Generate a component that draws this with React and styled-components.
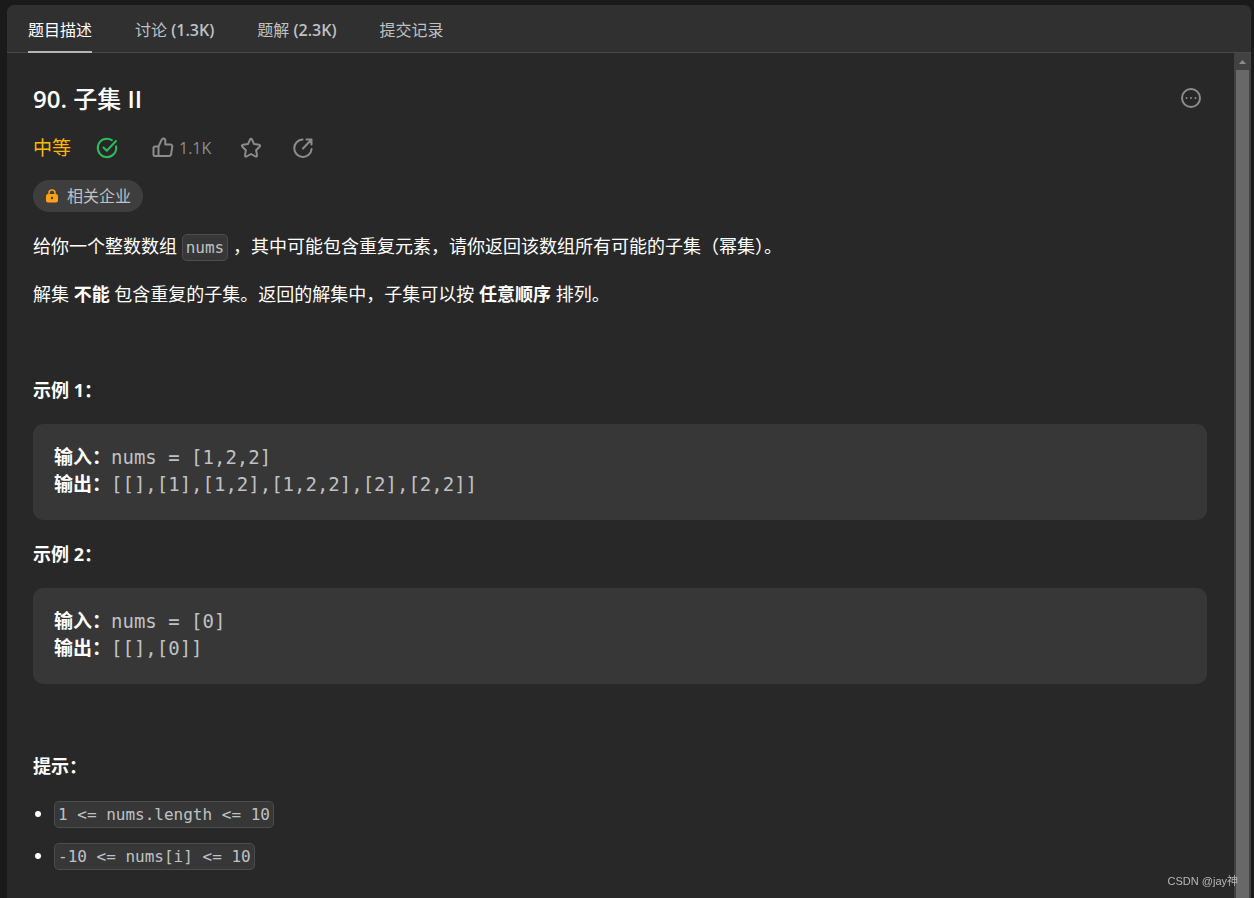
// Libraries
import React, { useState } from 'react';
import styled, { createGlobalStyle } from 'styled-components';

// Colors
const pageColor = '#1a1a1a';
const panelColor = '#282828';
const headerColor = '#303030';
const borderColor = '#484848';
const blockColor = '#373737';
const textColor = '#ffffff';
const labelColor = '#bfc1c4';
const iconColor = '#8c8c8c';

const cjk = `'Noto Sans CJK SC', sans-serif`;
const mono = `'DejaVu Sans Mono', ${cjk}`;

const GlobalStyle = createGlobalStyle`
  * {
    box-sizing: border-box;
  }
  body {
    margin: 0;
    background: ${pageColor};
    color: ${textColor};
    font-family: 'Open Sans', ${cjk};
    overflow: hidden;
  }
  button {
    border: 0;
    padding: 0;
    background: none;
    color: inherit;
    font: inherit;
    cursor: pointer;
  }
`

const Page = styled.div`
  height: 100vh;
  padding: 5px 3px 0 7px;
`

const Panel = styled.main`
  display: flex;
  flex-direction: column;
  height: 100%;
  background: ${panelColor};
  border-radius: 7px 7px 0 0;
  overflow: hidden;
`

const TabBar = styled.nav`
  display: flex;
  flex: none;
  gap: 43px;
  height: 48px;
  padding: 0 21px;
  background: ${headerColor};
  border-bottom: 1px solid ${borderColor};
`

const Tab = styled.button`
  height: 48px;
  font-size: 16px;
  line-height: 24px;
  color: ${props => props.$active ? textColor : labelColor};
  border-top: 4px solid transparent;
  border-bottom: 2px solid ${props => props.$active ? '#b4b6b6' : 'transparent'};
`

const Count = styled.span`
  font-weight: 600;
`

const Body = styled.div`
  display: flex;
  flex: 1;
  min-height: 0;
`

const Content = styled.article`
  flex: 1;
  min-width: 0;
  padding: 29px 27px 0 26px;
  overflow: hidden;
`

const TitleRow = styled.header`
  display: flex;
  align-items: flex-start;
  justify-content: space-between;
  height: 34px;
  padding-right: 4px;
`

const Title = styled.h1`
  margin: 0;
  font-size: 24px;
  line-height: 34px;
  font-weight: 600;

  span {
    font-weight: 500;
  }
`

const MoreButton = styled.button`
  height: 32px;
  color: ${iconColor};
`

const MetaRow = styled.div`
  display: flex;
  align-items: center;
  height: 28px;
  margin-top: 18px;
  color: ${iconColor};
`

const Difficulty = styled.span`
  width: 62px;
  font-size: 19px;
  line-height: 30px;
  color: #ffb800;
`

const IconButton = styled.button`
  display: flex;
  align-items: center;
  gap: 4px;
  height: 24px;
  margin-right: ${props => props.$done ? 32 : 28}px;
  font-size: 16px;
  color: ${props => props.$done ? '#2cbb5d' : iconColor};
`

const Icon = styled.svg`
  display: block;
  width: 24px;
  height: 24px;
  fill: none;
  stroke: currentColor;
  stroke-width: 2;
  stroke-linecap: round;
  stroke-linejoin: round;
`

const CompanyTag = styled.button`
  display: flex;
  align-items: center;
  gap: 8px;
  height: 32px;
  margin: 18px 0 21px;
  && {
    padding: 0 12px;
    background: #3e3e3e;
  }
  border-radius: 16px;
  font-size: 16px;
  line-height: 24px;
  color: ${labelColor};
`

const Lock = styled.svg`
  width: 14px;
  height: 14px;
`

const Text = styled.p`
  margin: 0 0 21px;
  font-size: 18px;
  line-height: 27px;
`

const Heading = styled.h2`
  margin: 0 0 20px;
  font-size: 18px;
  line-height: 27px;
  font-weight: 700;
`

const Code = styled.code`
  padding: 3px;
  border: 1px solid #4c4c4c;
  border-radius: 5px;
  background: ${blockColor};
  color: ${labelColor};
  font-family: ${mono};
  font-size: 16px;
  line-height: 1;
`

const Example = styled.pre`
  margin: 0 0 21px;
  padding: 20px 21px 22px;
  border-radius: 10px;
  background: ${blockColor};
  color: ${labelColor};
  font-family: ${mono};
  font-size: 19px;
  line-height: 27px;

  strong {
    color: ${textColor};
    font-family: ${cjk};
    line-height: 1;
  }
`

const Hints = styled.ul`
  display: flex;
  flex-direction: column;
  gap: 15px;
  margin: 0;
  padding-left: 21px;
  font-size: 18px;
  line-height: 27px;
`

const Scrollbar = styled.div`
  display: flex;
  flex: none;
  flex-direction: column;
  width: 17px;
  padding: 0 2px;
  background: #424242;
`

const ScrollUp = styled.div`
  display: flex;
  align-items: center;
  justify-content: center;
  height: 17px;
`

const Thumb = styled.div`
  flex: 1;
  background: #686868;
`

const Watermark = styled.div`
  position: fixed;
  right: 16px;
  bottom: 9px;
  font-family: 'Liberation Sans', ${cjk};
  font-size: 11px;
  line-height: 16px;
  color: #b8b8b8;
`

const tabs = [
  { name: '题目描述' },
  { name: '讨论', count: '1.3K' },
  { name: '题解', count: '2.3K' },
  { name: '提交记录' },
];

const App = () => {
  const [active, setActive] = useState('题目描述');

  return (
    <Page>
      <GlobalStyle />
      <Panel>
        <TabBar>
          {tabs.map(tab => (
            <Tab key={tab.name} $active={tab.name === active} onClick={() => setActive(tab.name)}>
              {tab.name}{tab.count && <Count> ({tab.count})</Count>}
            </Tab>
          ))}
        </TabBar>
        <Body>
          <Content>
            <TitleRow>
              <Title>90. <span>子集</span> II</Title>
              <MoreButton aria-label="更多">
                <Icon viewBox="0 0 24 24">
                  <circle cx="12" cy="12" r="9" />
                  <path d="M7.5 12h.01M12 12h.01M16.5 12h.01" />
                </Icon>
              </MoreButton>
            </TitleRow>

            <MetaRow>
              <Difficulty>中等</Difficulty>
              <IconButton $done aria-label="已解答">
                <Icon viewBox="0 0 24 24">
                  <path d="M21 10.2A9.2 9.2 0 1 1 16.8 4.1" />
                  <path d="M8.5 11.5l3.3 3.3L21 5" />
                </Icon>
              </IconButton>
              <IconButton>
                <Icon viewBox="0 0 24 24">
                  <path d="M7.5 11v9M4 10.500h3.5l3.2-6.900c.3-.7.9-1.1 1.5-1.1 1.3 0 2.1 1 2.1 2.2V8.500h5.1c1.2 0 2.1 1 1.9 2.2l-1.2 7.500A2.100 2.100 0 0 1 18 20H4a1.500 1.500 0 0 1-1.500-1.500v-6.500A1.500 1.500 0 0 1 4 10.500z" />
                </Icon>
                1.1K
              </IconButton>
              <IconButton aria-label="收藏">
                <Icon viewBox="0 0 24 24">
                  <path d="M11.100 3.400a1 1 0 0 1 1.800 0l2.200 4.700 5.100.7a1 1 0 0 1 .6 1.700l-3.700 3.700.9 5.200a1 1 0 0 1-1.500 1.100L12 18l-4.500 2.500A1 1 0 0 1 6 19.400l.9-5.200-3.700-3.700a1 1 0 0 1 .6-1.700l5.100-.7z" />
                </Icon>
              </IconButton>
              <IconButton aria-label="分享">
                <Icon viewBox="0 0 24 24">
                  <path d="M11.500 3.500A8.700 8.700 0 1 0 20.600 13M12 12.500L20.500 3.500M15.500 3.500h5v5" />
                </Icon>
              </IconButton>
            </MetaRow>

            <CompanyTag>
              <Lock viewBox="0 0 14 14">
                <path d="M4 6V4a3 3 0 0 1 6 0v2" fill="none" stroke="#ffa116" strokeWidth="1.500" />
                <rect x="1" y="5" width="12" height="8.500" rx="2" fill="#ffa116" />
                <circle cx="7" cy="9" r="1.200" fill="#3e3e3e" />
              </Lock>
              相关企业
            </CompanyTag>

            <Text>
              给你一个整数数组 <Code>nums</Code> ，其中可能包含重复元素，请你返回该数组所有可能的子集（幂集）。
            </Text>
            <Text>
              解集 <strong>不能</strong> 包含重复的子集。返回的解集中，子集可以按 <strong>任意顺序</strong> 排列。
            </Text>
            <Text>&nbsp;</Text>

            <Heading>示例 1：</Heading>
            <Example>
              <strong>输入：</strong>nums = [1,2,2]{'\n'}
              <strong>输出：</strong>[[],[1],[1,2],[1,2,2],[2],[2,2]]
            </Example>
            <Heading>示例 2：</Heading>
            <Example>
              <strong>输入：</strong>nums = [0]{'\n'}
              <strong>输出：</strong>[[],[0]]
            </Example>
            <Text>&nbsp;</Text>

            <Heading>提示：</Heading>
            <Hints>
              <li><Code>1 &lt;= nums.length &lt;= 10</Code></li>
              <li><Code>-10 &lt;= nums[i] &lt;= 10</Code></li>
            </Hints>
          </Content>
          <Scrollbar>
            <ScrollUp>
              <svg width="7" height="4" viewBox="0 0 7 4">
                <path d="M3.500 0L7 4H0z" fill="#8c8c8c" />
              </svg>
            </ScrollUp>
            <Thumb />
          </Scrollbar>
        </Body>
      </Panel>
      <Watermark>CSDN @jay神</Watermark>
    </Page>
  );
};

export default App;
